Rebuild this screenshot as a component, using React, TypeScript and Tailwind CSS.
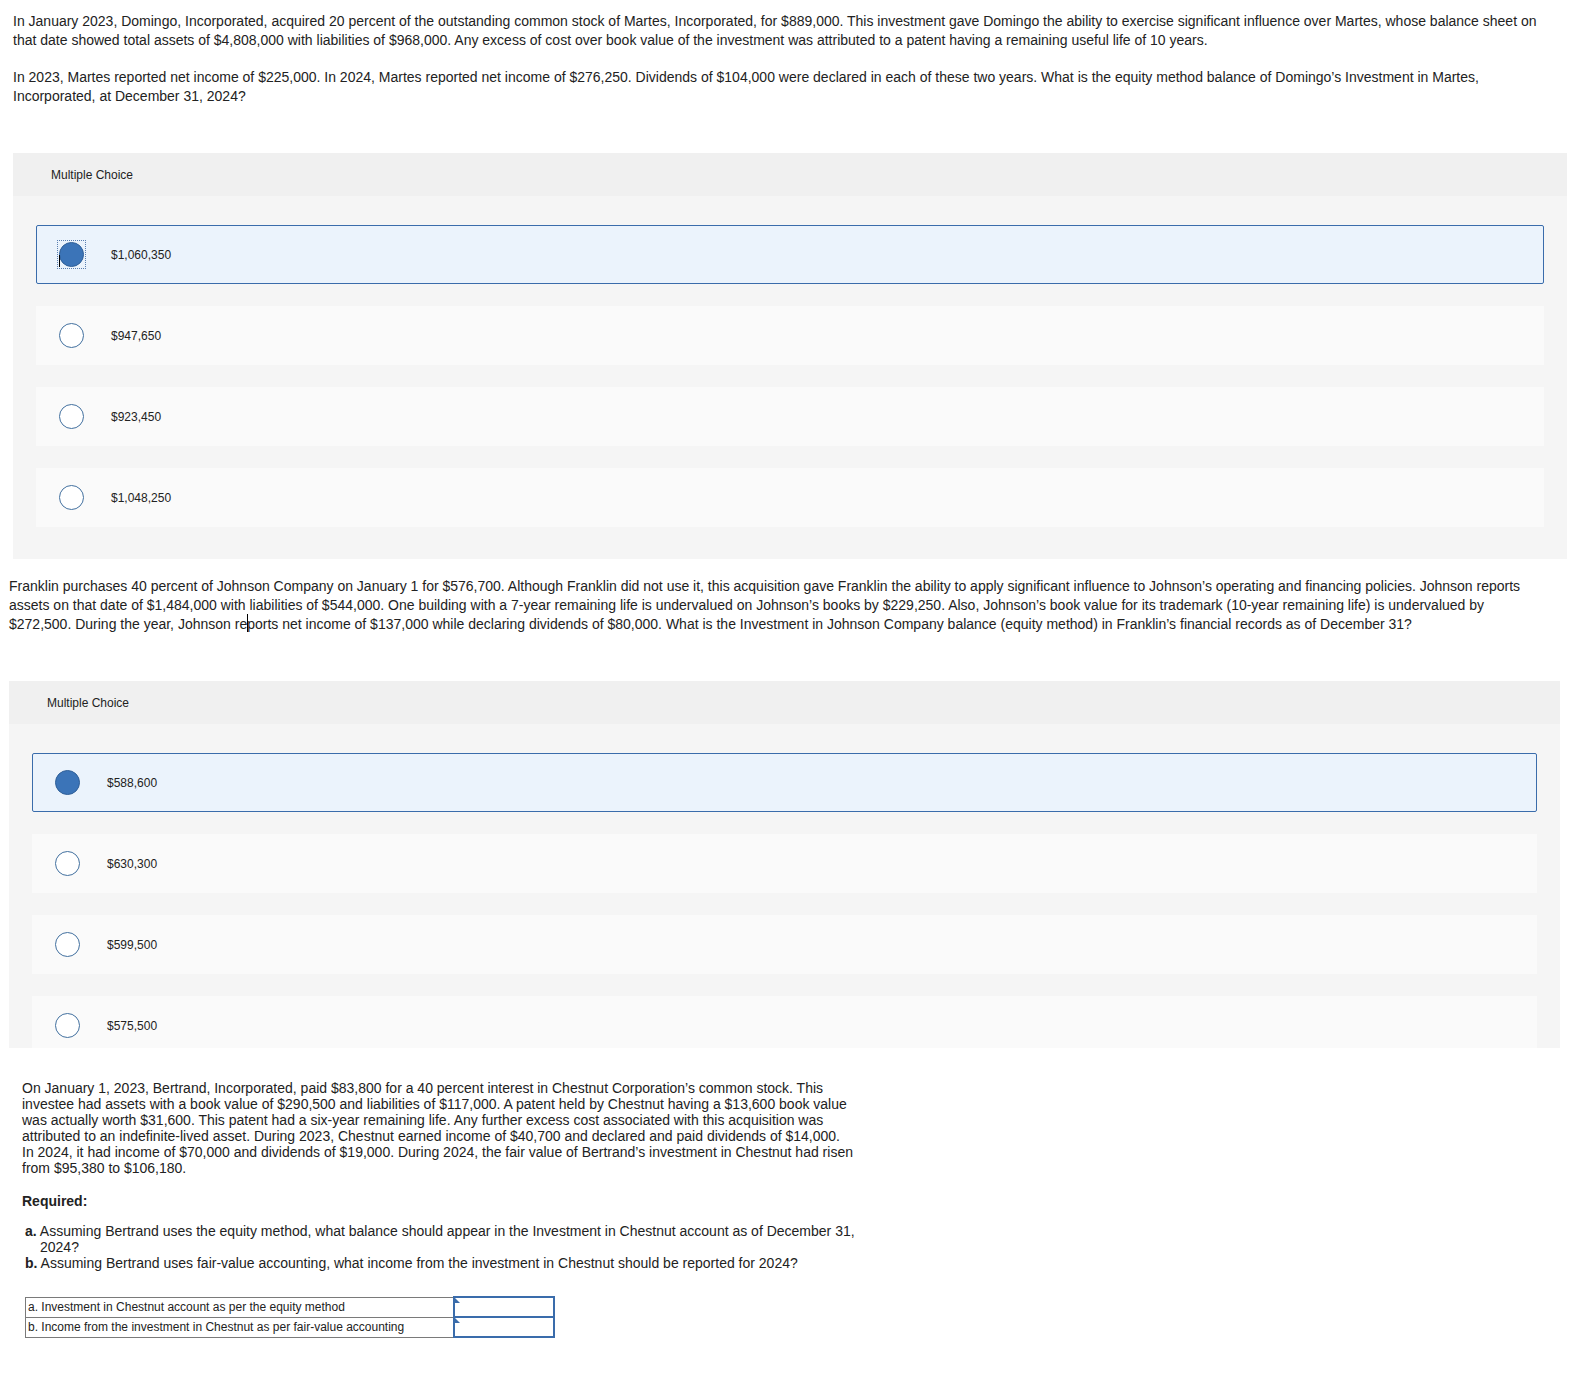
import React from 'react';

const font = { fontFamily: '"Liberation Sans", Arial, sans-serif' };

type Opt = { label: string; selected?: boolean; focus?: boolean };

function Radio({ selected, focus }: { selected?: boolean; focus?: boolean }) {
  return (
    <span className={`relative flex h-[27px] w-[27px] shrink-0 items-center justify-center ${focus ? 'outline outline-1 outline-dotted outline-[#5b7fb0]' : ''}`}>
      {selected ? (
        <span className="block h-[25px] w-[25px] rounded-full border border-[#2f5f98] bg-[#3b74b8]" />
      ) : (
        <span className="block h-[25px] w-[25px] rounded-full border-[1.5px] border-[#42709f] bg-white" />
      )}
      {focus && <span className="absolute bottom-[1px] left-[1px] h-[12px] w-[1px] bg-black" />}
    </span>
  );
}

function MultipleChoice({ options, className }: { options: Opt[]; className: string }) {
  return (
    <div className={`bg-[#f5f5f5] ${className}`}>
      <div className="flex h-[43px] items-center bg-[#f0f0f0] pl-[38px] text-[12px] text-[#222]">Multiple Choice</div>
      <div className="flex flex-col gap-[22px] px-[23px] pt-[29px] pb-[32px]">
        {options.map((o) => (
          <div
            key={o.label}
            className={`flex h-[59px] shrink-0 items-center pl-[21px] ${
              o.selected ? 'rounded-[2px] border border-[#3a6cab] bg-[#ebf3fc]' : 'border border-transparent bg-[#fafafa]'
            }`}
          >
            <Radio selected={o.selected} focus={o.focus} />
            <span className="ml-[26px] text-[12px] text-[#222]">{o.label}</span>
          </div>
        ))}
      </div>
    </div>
  );
}

function AnswerCell() {
  return (
    <td className="relative w-[100px] border-2 border-[#3a6cab] p-0">
      <span className="absolute left-0 top-0 h-0 w-0 border-l-[5px] border-t-[5px] border-l-[#3a6cab] border-t-transparent" />
    </td>
  );
}

export default function App() {
  return (
    <div className="min-h-screen w-[1572px] bg-white text-[#222]" style={font}>
      <div className="px-[13px] pt-[12px] text-[14px] leading-[19px]">
        <p>
          In January 2023, Domingo, Incorporated, acquired 20 percent of the outstanding common stock of Martes, Incorporated, for $889,000. This investment gave Domingo the ability to exercise significant influence over Martes, whose balance sheet on that date showed total assets of $4,808,000 with liabilities of $968,000. Any excess of cost over book value of the investment was attributed to a patent having a remaining useful life of 10 years.
        </p>
        <p className="mt-[18px]">
          In 2023, Martes reported net income of $225,000. In 2024, Martes reported net income of $276,250. Dividends of $104,000 were declared in each of these two years. What is the equity method balance of Domingo’s Investment in Martes, Incorporated, at December 31, 2024?
        </p>
      </div>

      <MultipleChoice
        className="ml-[13px] mt-[47px] w-[1554px]"
        options={[
          { label: '$1,060,350', selected: true, focus: true },
          { label: '$947,650' },
          { label: '$923,450' },
          { label: '$1,048,250' },
        ]}
      />

      <p className="ml-[9px] w-[1532px] pt-[18px] text-[14px] leading-[19px]">
        Franklin purchases 40 percent of Johnson Company on January 1 for $576,700. Although Franklin did not use it, this acquisition gave Franklin the ability to apply significant influence to Johnson’s operating and financing policies. Johnson reports assets on that date of $1,484,000 with liabilities of $544,000. One building with a 7-year remaining life is undervalued on Johnson’s books by $229,250. Also, Johnson’s book value for its trademark (10-year remaining life) is undervalued by $272,500. During the year, Johnson re
        <span className="relative">
          <span className="absolute left-0 top-[-2px] h-[18px] w-[1px] bg-black" />
        </span>
        ports net income of $137,000 while declaring dividends of $80,000. What is the Investment in Johnson Company balance (equity method) in Franklin’s financial records as of December 31?
      </p>

      <MultipleChoice
        className="ml-[9px] mt-[47px] h-[367px] w-[1551px] overflow-hidden"
        options={[
          { label: '$588,600', selected: true },
          { label: '$630,300' },
          { label: '$599,500' },
          { label: '$575,500' },
        ]}
      />

      <div className="pl-[22px] pt-[32px] text-[14px] leading-[16px]">
        <p className="w-[834px]">
          On January 1, 2023, Bertrand, Incorporated, paid $83,800 for a 40 percent interest in Chestnut Corporation’s common stock. This investee had assets with a book value of $290,500 and liabilities of $117,000. A patent held by Chestnut having a $13,600 book value was actually worth $31,600. This patent had a six-year remaining life. Any further excess cost associated with this acquisition was attributed to an indefinite-lived asset. During 2023, Chestnut earned income of $40,700 and declared and paid dividends of $14,000. In{'\u00a0'}2024, it had income of $70,000 and dividends of $19,000. During 2024, the fair value of Bertrand’s investment in Chestnut had risen from $95,380 to $106,180.
        </p>
        <p className="mt-[17px] font-bold">Required:</p>
        <div className="mt-[14px] w-[845px] pl-[3px]">
          <p className="pl-[15px] -indent-[15px]">
            <b>a.</b> Assuming Bertrand uses the equity method, what balance should appear in the Investment in Chestnut account as of December 31, 2024?
          </p>
          <p className="pl-[15px] -indent-[15px]">
            <b>b.</b> Assuming Bertrand uses fair-value accounting, what income from the investment in Chestnut should be reported for 2024?
          </p>
        </div>
        <table className="ml-[3px] mt-[25px] border-collapse text-[12px] leading-[18px]">
          <tbody>
            <tr className="h-[20px]">
              <td className="w-[428px] border border-[#7a7a7a] px-[2px] py-0">a. Investment in Chestnut account as per the equity method</td>
              <AnswerCell />
            </tr>
            <tr className="h-[20px]">
              <td className="w-[428px] border border-[#7a7a7a] px-[2px] py-0">b. Income from the investment in Chestnut as per fair-value accounting</td>
              <AnswerCell />
            </tr>
          </tbody>
        </table>
      </div>
    </div>
  );
}
